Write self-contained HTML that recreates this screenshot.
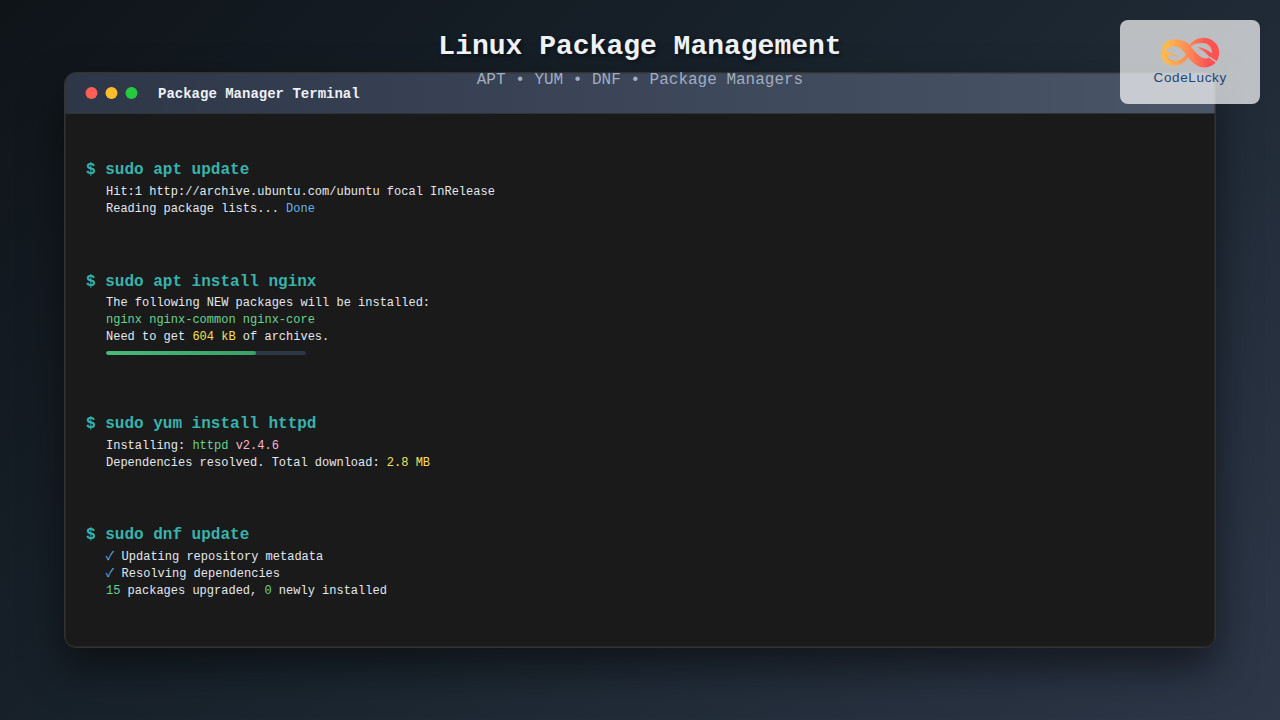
<!DOCTYPE html>
<html lang="en">
<head>
<meta charset="utf-8">
<title>Linux Package Management</title>
<style>
*{box-sizing:border-box;margin:0;padding:0}
html,body{width:1280px;height:720px;overflow:hidden}
body{position:relative;font-family:"Liberation Mono","Courier New",monospace;background:linear-gradient(135deg,#0f1419 0%,#1a252f 50%,#2d3748 100%);color:#fff}
.title{position:absolute;left:0;top:30.5px;width:1280px;text-align:center;font-size:28px;line-height:32px;font-weight:bold;color:#eef2f7;text-shadow:2px 2px 4px rgba(0,0,0,.5);z-index:5}
.subtitle{position:absolute;left:0;top:71px;width:1280px;text-align:center;font-size:16px;line-height:18px;color:#a0aec0;z-index:5}
.terminal{position:absolute;left:64px;top:72px;width:1152px;height:576px;background:#1a1a1a;border:1px solid #333;padding:1px;border-radius:12px;box-shadow:0 20px 40px rgba(0,0,0,.5);overflow:hidden}
.terminal::after{content:"";position:absolute;left:0;top:0;right:0;bottom:0;border:1px solid rgba(51,51,51,.5);border-radius:11px;pointer-events:none}
.thead{margin:-1px -1px 0;height:41px;background:linear-gradient(90deg,#2d3748,#4a5568);border-bottom:1px solid #333;display:flex;align-items:center;padding:0 0 0 21px}
.dot{width:12px;height:12px;border-radius:50%;margin-right:8px;transform:translate(-0.5px,0)}
.r{background:#ff5f56}.y{background:#ffbd2e}.g{background:#27ca3f}
.ttitle{margin-left:12px;font-size:14px;font-weight:bold;color:#eef2f7;position:relative;top:1px}
.cmd{position:absolute;left:21px;font-size:16px;line-height:20px;font-weight:bold;color:#38b2ac;white-space:pre}
.out{position:absolute;left:41px;font-size:12px;line-height:17px;color:#e2e8f0;white-space:pre}
.gr{color:#68d391}.yl{color:#f6e05e}.bl{color:#63b3ed}.pk{color:#fbb6ce}
.ck{display:inline-block;width:8.4px;height:12px;line-height:12px;font-family:"Noto Sans CJK JP","DejaVu Sans",sans-serif;font-size:12px;color:#63b3ed;text-indent:-0.3px;vertical-align:baseline;overflow:visible}
.bar{position:absolute;left:41px;top:278px;width:200px;height:4px;border-radius:2px;background:#2d3748;overflow:hidden}
.bar i{display:block;width:75%;height:100%;border-radius:2px;background:linear-gradient(90deg,#48bb78,#38a169)}
.logo{position:absolute;left:1120px;top:20px;width:140px;height:84px;border-radius:8px;background:rgba(255,255,255,.7);z-index:10}
.logo svg{position:absolute;left:0;top:0}
</style>
</head>
<body>
<div class="title">Linux Package Management</div>
<div class="subtitle">APT • YUM • DNF • Package Managers</div>
<div class="terminal">
  <div class="thead"><span class="dot r"></span><span class="dot y"></span><span class="dot g"></span><span class="ttitle">Package Manager Terminal</span></div>
  <div class="cmd" style="top:87px">$ sudo apt update</div>
  <div class="out" style="top:111px">Hit:1 http://archive.ubuntu.com/ubuntu focal InRelease
Reading package lists... <span class="bl">Done</span></div>
  <div class="cmd" style="top:199px">$ sudo apt install nginx</div>
  <div class="out" style="top:222px">The following NEW packages will be installed:
<span class="gr">nginx nginx-common nginx-core</span>
Need to get <span class="yl">604 kB</span> of archives.</div>
  <div class="bar"><i></i></div>
  <div class="cmd" style="top:341px">$ sudo yum install httpd</div>
  <div class="out" style="top:365px">Installing: <span class="gr">httpd</span> <span class="pk">v2.4.6</span>
Dependencies resolved. Total download: <span class="yl">2.8 MB</span></div>
  <div class="cmd" style="top:452px">$ sudo dnf update</div>
  <div class="out" style="top:476px"><span class="ck">✓</span> Updating repository metadata
<span class="ck">✓</span> Resolving dependencies
<span class="gr">15</span> packages upgraded, <span class="gr">0</span> newly installed</div>
</div>
<div class="logo">
<svg width="140" height="84" viewBox="0 0 140 84">
<defs>
<linearGradient id="lg" gradientUnits="userSpaceOnUse" x1="55" y1="0" x2="1225" y2="0"><stop offset="0.12" stop-color="#ffb84d"/><stop offset="0.5" stop-color="#ff8656"/><stop offset="0.8" stop-color="#ff5353"/></linearGradient>
<mask id="cut" maskUnits="userSpaceOnUse" x="0" y="0" width="1280" height="720">
<rect x="0" y="0" width="1280" height="720" fill="#fff"/>
<path d="M45 290 L190 342" stroke="#000" stroke-width="20" fill="none"/>
<path d="M1025 462 L1180 566" stroke="#000" stroke-width="30" fill="none"/>
</mask>
</defs>
<g transform="translate(38,14) scale(0.05)" fill="url(#lg)">
<g mask="url(#cut)">
<path fill-rule="evenodd" d="M630 215 C700 130 800 75 900 75 C1080 75 1225 200 1225 370 C1225 540 1100 670 930 670 C790 670 690 570 600 470 C530 570 430 635 320 635 C170 635 55 520 55 380 C55 220 180 105 330 105 C450 105 560 150 630 215 Z M555 410 C500 320 420 245 330 245 C250 245 190 290 175 340 C150 440 220 540 330 540 C420 540 500 490 555 410 Z M655 245 C730 195 810 180 880 180 C1000 180 1085 270 1075 380 C1070 440 1040 480 960 490 C860 500 760 380 655 245 Z"/>
<path d="M165 350 Q300 390 425 454 Q290 442 160 405 Z"/>
<path d="M785 262 Q950 280 1080 390 L1050 480 Q930 340 785 262 Z"/>
<path d="M940 186 C1030 205 1085 290 1068 372" fill="none" stroke="#ff9a4a" stroke-width="16" stroke-linecap="round"/>
<path d="M160 410 C165 470 215 530 300 540" fill="none" stroke="#ff9540" stroke-width="16" stroke-linecap="round"/>
</g>
</g>
<text x="70.2" y="61.7" text-anchor="middle" font-family="Liberation Sans, sans-serif" font-size="13.5" fill="#20467a" letter-spacing="0.65">CodeLucky</text>
</svg>
</div>
</body>
</html>
